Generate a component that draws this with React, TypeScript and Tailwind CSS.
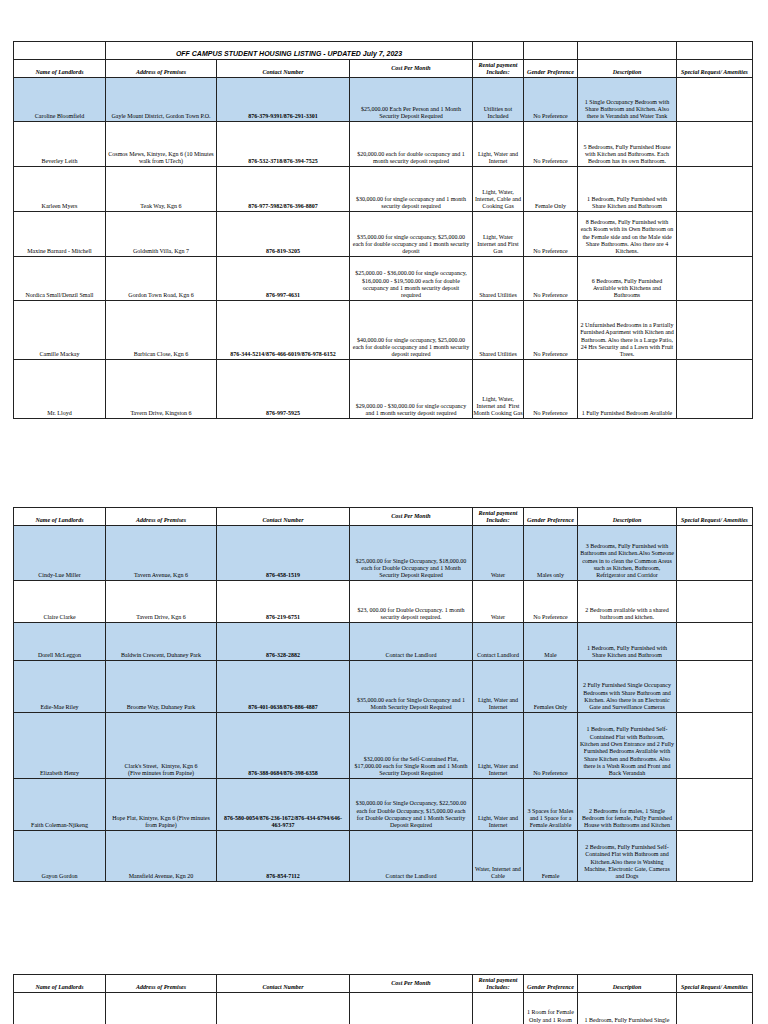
import React from "react";

type Row = { h: number; blue?: boolean; c: string[][] };

const L = (s: string) => s.split("|");

const table1: Row[] = [
  {
    h: 44,
    blue: true,
    c: [
      ["Caroline Bloomfield"],
      ["Gayle Mount District, Gordon Town P.O."],
      ["876-379-9391/876-291-3301"],
      L("$25,000.00 Each Per Person and 1 Month|Security Deposit Required"),
      L("Utilities not|Included"),
      ["No Preference"],
      L("1 Single Occupancy Bedroom with|Share Bathroom and Kitchen. Also|there is Verandah and Water Tank"),
    ],
  },
  {
    h: 45,
    c: [
      ["Beverley Leith"],
      L("Cosmos Mews, Kintyre, Kgn 6 (10 Minutes|walk from UTech)"),
      ["876-532-3718/876-394-7525"],
      L("$20,000.00 each for double occupancy and 1|month security deposit required"),
      L("Light, Water and|Internet"),
      ["No Preference"],
      L("5 Bedrooms, Fully Furnished House|with Kitchen and Bathrooms. Each|Bedroom has its own Bathroom."),
    ],
  },
  {
    h: 45,
    c: [
      ["Karleen Myers"],
      ["Teak Way, Kgn 6"],
      ["876-977-5982/876-396-8807"],
      L("$30,000.00 for single occupancy and 1 month|security deposit required"),
      L("Light, Water,|Internet, Cable and|Cooking Gas"),
      ["Female Only"],
      L("1 Bedroom, Fully Furnished with|Share Kitchen and Bathroom"),
    ],
  },
  {
    h: 45,
    c: [
      ["Maxine Barnard - Mitchell"],
      ["Goldsmith Villa, Kgn 7"],
      ["876-819-3205"],
      L("$35,000.00 for single occupancy, $25,000.00|each for double occupancy and 1 month security|deposit"),
      L("Light, Water|Internet and First|Gas"),
      ["No Preference"],
      L("8 Bedrooms, Fully Furnished with|each Room with its Own Bathroom on|the Female side and on the Male side|Share Bathrooms. Also there are 4|Kitchens."),
    ],
  },
  {
    h: 44,
    c: [
      ["Nordica Small/Denzil Small"],
      ["Gordon Town Road, Kgn 6"],
      ["876-997-4631"],
      L("$25,000.00 - $36,000.00 for single occupancy,|$16,000.00 - $19,500.00 each for double|occupancy and 1 month security deposit|required"),
      ["Shared Utilities"],
      ["No Preference"],
      L("6 Bedrooms, Fully Furnished|Available with Kitchens and|Bathrooms"),
    ],
  },
  {
    h: 59,
    c: [
      ["Camille Mackay"],
      ["Barbican Close, Kgn 6"],
      ["876-344-5214/876-466-6019/876-978-6152"],
      L("$40,000.00 for single occupancy, $25,000.00|each for double occupancy and 1 month security|deposit required"),
      ["Shared Utilities"],
      ["No Preference"],
      L("2 Unfurnished Bedrooms in a Partially|Furnished Apartment with Kitchen and|Bathroom. Also there is a Large Patio,|24 Hrs Security and a Lawn with Fruit|Trees."),
    ],
  },
  {
    h: 59,
    c: [
      ["Mr. Lloyd"],
      ["Tavern Drive, Kingston 6"],
      ["876-997-5925"],
      L("$29,000.00 - $30,000.00 for single occupancy|and 1 month security deposit required"),
      L("Light, Water,|Internet and  First|Month Cooking Gas"),
      ["No Preference"],
      ["1 Fully Furnished Bedroom Available"],
    ],
  },
];

const table2: Row[] = [
  {
    h: 55,
    blue: true,
    c: [
      ["Cindy-Lue Miller"],
      ["Tavern Avenue, Kgn 6"],
      ["876-458-1519"],
      L("$25,000.00 for Single Occupancy, $18,000.00|each for Double Occupancy and 1 Month|Security Deposit Required"),
      ["Water"],
      ["Males only"],
      L("3 Bedrooms, Fully Furnished with|Bathrooms and Kitchen.Also Someone|comes in to clean the Common Areas|such as Kitchen, Bathroom,|Refrigerator and Corridor"),
    ],
  },
  {
    h: 42,
    c: [
      ["Claire Clarke"],
      ["Tavern Drive, Kgn 6"],
      ["876-219-6751"],
      L("$23, 000.00 for Double Occupancy. 1 month|security deposit required."),
      ["Water"],
      ["No Preference"],
      L("2 Bedroom available with a shared|bathroom and kitchen."),
    ],
  },
  {
    h: 38,
    blue: true,
    c: [
      ["Dorell McLeggon"],
      ["Baldwin Crescent, Duhaney Park"],
      ["876-328-2882"],
      ["Contact the Landlord"],
      ["Contact Landlord"],
      ["Male"],
      L("1 Bedroom, Fully Furnished with|Share Kitchen and Bathroom"),
    ],
  },
  {
    h: 52,
    blue: true,
    c: [
      ["Edie-Mae Riley"],
      ["Broome Way, Duhaney Park"],
      ["876-401-0638/876-886-4887"],
      L("$35,000.00 each for Single Occupancy and 1|Month Security Deposit Required"),
      L("Light, Water and|Internet"),
      ["Females Only"],
      L("2 Fully Furnished Single Occupancy|Bedrooms with Share Bathroom and|Kitchen. Also there is an Electronic|Gate and Surveillance Cameras"),
    ],
  },
  {
    h: 66,
    blue: true,
    c: [
      ["Elizabeth Henry"],
      L("Clark's Street,  Kintyre, Kgn 6|(Five minutes from Papine)"),
      ["876-388-0684/876-398-6358"],
      L("$32,000.00 for the Self-Contained Flat,|$17,000.00 each for Single Room and 1 Month|Security Deposit Required"),
      L("Light, Water and|Internet"),
      ["No Preference"],
      L("1 Bedroom, Fully Furnished Self-|Contained Flat with Bathroom,|Kitchen and Own Entrance and 2 Fully|Furnished Bedrooms Available with|Share Kitchen and Bathrooms. Also|there is a Wash Room and Front and|Back Verandah"),
    ],
  },
  {
    h: 52,
    blue: true,
    c: [
      ["Faith Coleman-Njikeng"],
      L("Hope Flat, Kintyre, Kgn 6 (Five minutes|from Papine)"),
      L("876-580-0054/876-236-1672/876-434-6794/646-|463-9737"),
      L("$30,000.00 for Single Occupancy, $22,500.00|each for Double Occupancy, $15,000.00 each|for Double Occupancy and 1 Month Security|Deposit Required"),
      L("Light, Water and|Internet"),
      L("3 Spaces for Males|and 1 Space for a|Female Available"),
      L("2 Bedrooms for males, 1 Single|Bedroom for female, Fully Furnished|House with Bathrooms and Kitchen"),
    ],
  },
  {
    h: 51,
    blue: true,
    c: [
      ["Gayon Gordon"],
      ["Mansfield Avenue, Kgn 20"],
      ["876-854-7112"],
      ["Contact the Landlord"],
      L("Water, Internet and|Cable"),
      ["Female"],
      L("2 Bedrooms, Fully Furnished Self-|Contained Flat with Bathroom and|Kitchen.Also there is Washing|Machine, Electronic Gate, Cameras|and Dogs"),
    ],
  },
];

const table3: Row[] = [
  {
    h: 47,
    c: [
      [],
      [],
      [],
      [],
      [],
      L("1 Room for Female|Only and 1 Room|for Male Only|Available"),
      L("1 Bedroom, Fully Furnished Single|Occupancy Rooms with Share|Kitchen and Bathroom"),
    ],
  },
];

const GRID = "grid grid-cols-[92px_111px_133px_123px_51px_54px_99px_76px]";

function Cell({ lines, blue, bold }: { lines: string[]; blue?: boolean; bold?: boolean }) {
  return (
    <div
      className={
        "flex flex-col items-center justify-end border-r border-b border-[#222] pb-[0.5px] text-center leading-[7.3px] " +
        (blue ? "bg-[#bdd7ee] " : "bg-white ") +
        (bold ? "font-bold" : "font-normal")
      }
    >
      {lines.map((l, i) => (
        <div key={i} className="whitespace-pre">
          {l}
        </div>
      ))}
    </div>
  );
}

function HeaderRow() {
  const H = (t: string[], center?: boolean) => (
    <div
      className={
        "flex flex-col items-center border-r border-b border-[#222] text-center font-bold italic leading-[7px] " +
        (center ? "justify-center" : "justify-end pb-[1.5px]")
      }
    >
      {t.map((l, i) => (
        <div key={i} className="whitespace-nowrap">
          {l}
        </div>
      ))}
    </div>
  );
  return (
    <div className={GRID + " h-[18px]"}>
      {H(["Name of Landlords"])}
      {H(["Address of Premises"])}
      {H(["Contact Number"])}
      {H(["Cost Per Month"], true)}
      {H(["Rental payment", "Includes:"])}
      {H(["Gender Preference"])}
      {H(["Description"])}
      {H(["Special Request/ Amenities"])}
    </div>
  );
}

function Rows({ rows }: { rows: Row[] }) {
  return (
    <>
      {rows.map((r, i) => (
        <div key={i} className={GRID} style={{ height: r.h }}>
          {r.c.map((lines, j) => (
            <Cell key={j} lines={lines} blue={r.blue} bold={j === 2} />
          ))}
          <Cell lines={[]} />
        </div>
      ))}
    </>
  );
}

export default function App() {
  return (
    <div className="h-[1024px] w-[768px] overflow-hidden bg-white pl-[13px] pt-[41px] font-['Liberation_Serif',serif] text-[6px] text-black">
      {/* Table 1 */}
      <div className="w-[740px] border-t border-l border-[#222]">
        <div className={GRID + " h-[18px]"}>
          <div className="border-r border-b border-[#222]" />
          <div className="col-span-3 flex items-end justify-center border-r border-b border-[#222] pb-[1px] font-['Liberation_Sans',Arial,sans-serif] text-[7px] font-bold italic leading-[8px] text-black">
            OFF CAMPUS STUDENT HOUSING LISTING - UPDATED July 7, 2023
          </div>
          <div className="border-r border-b border-[#222]" />
          <div className="border-r border-b border-[#222]" />
          <div className="border-r border-b border-[#222]" />
          <div className="border-r border-b border-[#222]" />
        </div>
        <HeaderRow />
        <Rows rows={table1} />
      </div>

      {/* Table 2 */}
      <div className="mt-[88px] w-[740px] border-t border-l border-[#222]">
        <HeaderRow />
        <Rows rows={table2} />
      </div>

      {/* Table 3 */}
      <div className="mt-[92px] w-[740px] border-t border-l border-[#222]">
        <HeaderRow />
        <Rows rows={table3} />
      </div>
    </div>
  );
}
